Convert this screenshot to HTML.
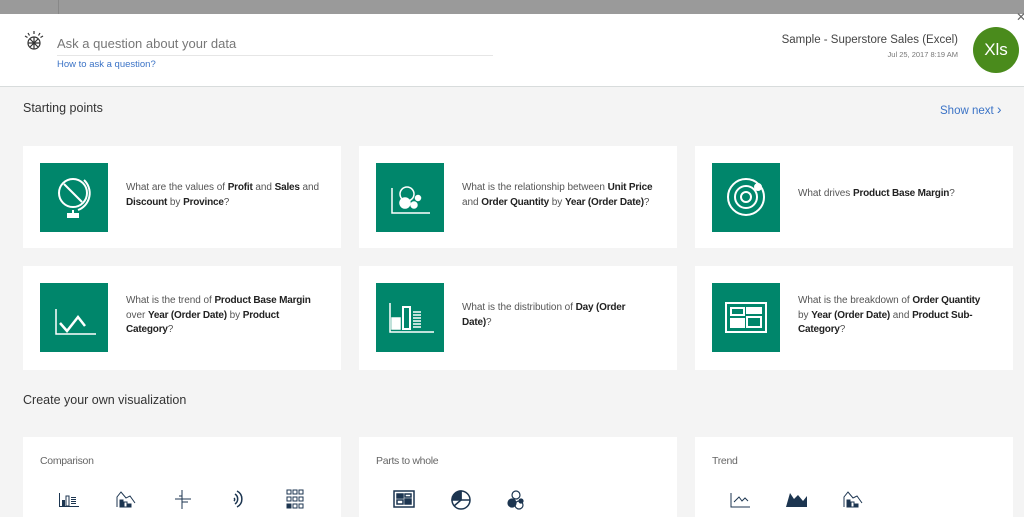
<!DOCTYPE html>
<html><head><meta charset="utf-8"><style>
*{margin:0;padding:0;box-sizing:border-box}
body{width:1024px;height:515px;overflow:hidden;background:#f4f4f4;font-family:"Liberation Sans",sans-serif;position:relative;color:#333}
.top{position:absolute;left:0;top:0;width:1024px;height:14px;background:#9a9a9a}
.top i{position:absolute;left:58px;top:0;width:1px;height:14px;background:#888}
.hdr{position:absolute;left:0;top:14px;width:1024px;height:73px;background:#fff;border-bottom:1px solid #d8dcdc}
.ask{position:absolute;left:57px;top:22px;font-size:13px;color:#777}
.line{position:absolute;left:57px;top:41px;width:436px;height:1px;background:#e6e6e6}
.how{position:absolute;left:57px;top:45px;font-size:9.5px;color:#3b73c6}
.src{position:absolute;right:66px;top:20px;font-size:11.5px;color:#444;text-align:right}
.date{position:absolute;right:66px;top:36px;font-size:7.5px;color:#777}
.xls{position:absolute;left:973px;top:27px;width:46px;height:46px;border-radius:50%;background:#4a8b1c;color:#fff;font-size:17px;text-align:center;line-height:46px}
.cl{position:absolute;left:1016px;top:10px;font-size:12px;color:#666}
.h2{position:absolute;font-size:12.5px;color:#333}
.next{position:absolute;left:940px;top:101px;font-size:11.5px;color:#3b73c6}
.card{position:absolute;background:#fff;width:318px}
.ic{position:absolute;left:17px;width:68px;height:69px;background:#00866b}
.ic svg{width:68px;height:69px}
.q{position:absolute;left:103px;font-size:10px;letter-spacing:-0.05px;line-height:14.5px;color:#555;white-space:nowrap}
.q b{color:#222;letter-spacing:-0.2px}
.bc{position:absolute;top:437px;width:318px;height:80px;background:#fff}
.bc span{position:absolute;left:17px;top:18px;font-size:10.5px;color:#666;letter-spacing:-0.3px}
.bc svg{position:absolute;top:52px}
</style></head><body>
<div class="top"><i></i></div>
<div class="hdr">
<svg style="position:absolute;left:23px;top:16px" width="22" height="22" viewBox="0 0 22 22" fill="none" stroke="#333" stroke-width="1.2"><circle cx="11" cy="13" r="6"/><path d="M5 13h12M11 7v12M7 9l8 8M15 9l-8 8"/><path d="M11 1v3M5 3l1.5 2.5M17 3l-1.5 2.5M2 6l2.5 1.5M20 6l-2.5 1.5"/></svg>
<div class="ask">Ask a question about your data</div>
<div class="line"></div>
<div class="how">How to ask a question?</div>
<div class="src">Sample - Superstore Sales (Excel)</div>
<div class="date">Jul 25, 2017 8:19 AM</div>
</div>
<div class="xls">Xls</div>
<div class="cl">✕</div>
<div class="h2" style="left:23px;top:101px">Starting points</div>
<div class="next">Show next <span style="font-size:14px">›</span></div>

<div class="card" style="left:23px;top:146px;height:102px"><div class="ic" style="top:17px"><svg viewBox="0 0 68 69" fill="none" stroke="#fff" stroke-width="2"><circle cx="33" cy="30" r="14"/><path d="M24 21l18 18"/><path d="M44 17a18 18 0 0 1-6 30"/><path d="M33 47v4"/><rect x="28" y="51" width="10" height="3" fill="#fff"/></svg></div><div class="q" style="top:35px">What are the values of <b>Profit</b> and <b>Sales</b> and<br><b>Discount</b> by <b>Province</b>?</div></div>
<div class="card" style="left:359px;top:146px;height:102px"><div class="ic" style="top:17px"><svg viewBox="0 0 68 69" fill="none" stroke="#fff" stroke-width="1.5"><path d="M16 25v25h38"/><circle cx="31" cy="31" r="7"/><circle cx="29" cy="40" r="5" fill="#fff"/><circle cx="38" cy="42" r="3" fill="#fff"/><circle cx="42" cy="35" r="2.5" fill="#fff"/></svg></div><div class="q" style="top:35px">What is the relationship between <b>Unit Price</b><br>and <b>Order Quantity</b> by <b>Year (Order Date)</b>?</div></div>
<div class="card" style="left:695px;top:146px;height:102px"><div class="ic" style="top:17px"><svg viewBox="0 0 68 69" fill="none" stroke="#fff" stroke-width="2"><circle cx="34" cy="34" r="18"/><circle cx="34" cy="34" r="11"/><circle cx="34" cy="34" r="5"/><circle cx="46" cy="24" r="3" fill="#fff"/></svg></div><div class="q" style="top:41px">What drives <b>Product Base Margin</b>?</div></div>

<div class="card" style="left:23px;top:266px;height:104px"><div class="ic" style="top:17px"><svg viewBox="0 0 68 69" fill="none" stroke="#fff" stroke-width="1.5"><path d="M16 26v25h40"/><path d="M20 40l7 8 11-14 7 9" stroke-width="2.5"/></svg></div><div class="q" style="top:28px">What is the trend of <b>Product Base Margin</b><br>over <b>Year (Order Date)</b> by <b>Product</b><br><b>Category</b>?</div></div>
<div class="card" style="left:359px;top:266px;height:104px"><div class="ic" style="top:17px"><svg viewBox="0 0 68 69" fill="none" stroke="#fff" stroke-width="1.5"><path d="M14 20v29h44"/><rect x="16" y="35" width="8" height="11" fill="#fff"/><rect x="27" y="24" width="7" height="22" stroke-width="2"/><path d="M37 29h8M37 32h8M37 35h8M37 38h8M37 41h8M37 44h8"/></svg></div><div class="q" style="top:35px">What is the distribution of <b>Day (Order</b><br><b>Date)</b>?</div></div>
<div class="card" style="left:695px;top:266px;height:104px"><div class="ic" style="top:17px"><svg viewBox="0 0 68 69" fill="none" stroke="#fff" stroke-width="2"><rect x="14" y="20" width="40" height="29"/><rect x="19" y="25" width="13" height="7"/><rect x="35" y="25" width="14" height="5" fill="#fff"/><rect x="19" y="36" width="13" height="8" fill="#fff"/><rect x="35" y="34" width="14" height="10"/></svg></div><div class="q" style="top:28px">What is the breakdown of <b>Order Quantity</b><br>by <b>Year (Order Date)</b> and <b>Product Sub-</b><br><b>Category</b>?</div></div>

<div class="h2" style="left:23px;top:393px">Create your own visualization</div>

<div class="bc" style="left:23px"><span>Comparison</span>
<svg style="left:35px" width="22" height="20" viewBox="0 0 22 20" fill="#1c3550"><path d="M1 4v14h20v-1H2V4z"/><rect x="4" y="11" width="3" height="6"/><rect x="8" y="7" width="3" height="10" fill="none" stroke="#1c3550"/><path d="M13 8h5v1h-5zM13 10h5v1h-5zM13 12h5v1h-5zM13 14h5v1h-5z"/></svg>
<svg style="left:92px" width="22" height="20" viewBox="0 0 22 20" fill="none" stroke="#1c3550"><path d="M2 18V8l4-5 5 6 4-2 5 7"/><rect x="5" y="11" width="3" height="7" fill="#1c3550"/><rect x="9" y="13" width="3" height="5"/><rect x="13" y="15" width="3" height="3" fill="#1c3550"/></svg>
<svg style="left:149px" width="22" height="20" viewBox="0 0 22 20" fill="none" stroke="#1c3550"><path d="M10 1v19M3 10h16M7 7h3M10 13h6"/></svg>
<svg style="left:205px" width="22" height="20" viewBox="0 0 22 20" fill="none" stroke="#1c3550" stroke-width="1.5"><path d="M7 5a6 6 0 0 1 0 10M9 2a9 9 0 0 1 0 16M6 9a2 2 0 0 1 0 3"/></svg>
<svg style="left:262px" width="22" height="20" viewBox="0 0 22 20" fill="none" stroke="#1c3550"><path d="M2 1h4v4H2zM8 1h4v4H8zM14 1h4v4h-4zM2 8h4v4H2zM8 8h4v4H8zM14 8h4v4h-4zM8 15h4v4H8zM14 15h4v4h-4z"/><rect x="2" y="15" width="4" height="4" fill="#1c3550"/></svg>
</div>
<div class="bc" style="left:359px"><span>Parts to whole</span>
<svg style="left:34px" width="22" height="20" viewBox="0 0 22 20" fill="none" stroke="#1c3550" stroke-width="1.5"><rect x="1" y="2" width="20" height="16"/><rect x="4" y="5" width="6" height="4" fill="#1c3550"/><rect x="12" y="5" width="6" height="3"/><rect x="4" y="11" width="6" height="4"/><rect x="12" y="10" width="6" height="5" fill="#1c3550"/></svg>
<svg style="left:91px" width="22" height="22" viewBox="0 0 22 22" fill="none" stroke="#1c3550" stroke-width="1.5"><circle cx="11" cy="11" r="9"/><path d="M11 2v9h9M11 11L4 17"/><path d="M11 2a9 9 0 0 0-9 9h9z" fill="#1c3550"/></svg>
<svg style="left:147px" width="22" height="22" viewBox="0 0 22 22" fill="none" stroke="#1c3550" stroke-width="1.2"><circle cx="10" cy="6" r="4"/><circle cx="6" cy="14" r="4" fill="#1c3550"/><circle cx="13" cy="16" r="4"/><circle cx="15" cy="12" r="2" fill="#1c3550"/></svg>
</div>
<div class="bc" style="left:695px"><span>Trend</span>
<svg style="left:34px" width="22" height="20" viewBox="0 0 22 20" fill="none" stroke="#1c3550"><path d="M2 4v14h19"/><path d="M5 13l5-5 3 4 3-3 3 3"/></svg>
<svg style="left:90px" width="24" height="20" viewBox="0 0 24 20" fill="#1c3550"><path d="M1 18l4-14 4 6 4-4 5 6 4-5v11z"/></svg>
<svg style="left:147px" width="22" height="20" viewBox="0 0 22 20" fill="none" stroke="#1c3550"><path d="M2 18V8l4-5 5 6 4-2 5 7"/><rect x="5" y="11" width="3" height="7" fill="#1c3550"/><rect x="9" y="13" width="3" height="5"/><rect x="13" y="15" width="3" height="3" fill="#1c3550"/></svg>
</div>
</body></html>
